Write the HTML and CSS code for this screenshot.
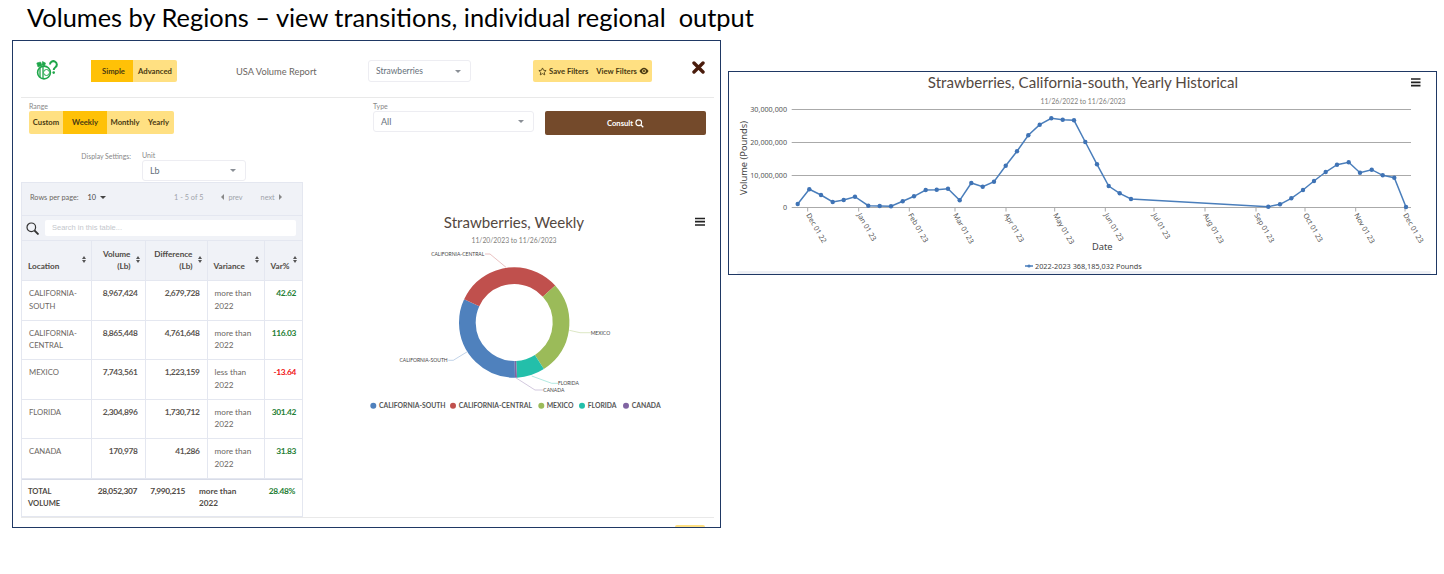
FILE: index.html
```html
<!DOCTYPE html>
<html>
<head>
    <meta charset="utf-8" />
    <title>Volumes by Regions</title>
    <link rel="stylesheet" href="styles.css">
</head>
<body>
    <h1 class="slide-title">Volumes by Regions – view transitions, individual regional &nbsp;output</h1>
    <div class="slide">

        <!-- report window -->
        <div class="window report">
            <div class="topbar">
                <svg class="logo" width="22" height="20" viewBox="0 0 22 20">
                    <g fill="none" stroke="#1fa64a">
                        <circle cx="8" cy="12.5" r="6.4" stroke-width="1.6"/>
                        <path d="M4 8v9M7 6.5v12" stroke-width="1.3"/>
                        <path d="M2 7 L0.8 3 L4.5 2 L6 5.5z" fill="#1fa64a" stroke-width=".6"/>
                        <path d="M6 5 L6.5 1.5 L9.5 3 L8.5 6z" fill="#1fa64a" stroke-width=".6"/>
                        <circle cx="10.5" cy="12.5" r="3" fill="#fff" stroke-width="1"/>
                    </g>
                    <path d="M14 4.5a3.4 3.4 0 1 1 5.4 2.8c-1.2.9-1.7 1.3-1.7 2.7" fill="none" stroke="#1fa64a" stroke-width="2"/>
                    <circle cx="17.7" cy="12.6" r="1.3" fill="#1fa64a"/>
                </svg>
                <div class="btn-group top-mode">
                    <span class="btn on simple">Simple</span>
                    <span class="btn advanced">Advanced</span>
                </div>
                <div class="report-name">USA Volume Report</div>
                <div class="select product"><span>Strawberries</span><i class="caret"></i></div>
                <div class="btn-group filters">
                    <svg width="9" height="9" viewBox="0 0 24 24"><path d="M12 2.5l2.9 6.2 6.8.8-5 4.7 1.3 6.8-6-3.4-6 3.4 1.3-6.8-5-4.7 6.8-.8z" fill="none" stroke="#4a3a12" stroke-width="2.2"/></svg>
                    <span>Save Filters</span>
                    <span class="view-filters">View Filters</span>
                    <svg width="10" height="8" viewBox="0 0 24 18"><path d="M1 9c3-5 7-8 11-8s8 3 11 8c-3 5-7 8-11 8S4 14 1 9z" fill="#4a3a12"/><circle cx="12" cy="9" r="4.5" fill="#ffe082"/><circle cx="12" cy="9" r="2.5" fill="#4a3a12"/></svg>
                </div>
                <svg class="close" width="13" height="13" viewBox="0 0 13 13"><path d="M2 2l9 9M11 2l-9 9" stroke="#4a1c0c" stroke-width="3.4" stroke-linecap="round"/></svg>
            </div>

            <div class="filter-row">
                <div class="range">
                    <label>Range</label>
                    <div class="btn-group">
                        <span class="btn custom">Custom</span>
                        <span class="btn on weekly">Weekly</span>
                        <span class="btn monthly">Monthly</span>
                        <span class="btn yearly">Yearly</span>
                    </div>
                </div>
                <div class="type">
                    <label>Type</label>
                    <div class="select type-select"><span>All</span><i class="caret"></i></div>
                </div>
                <div class="consult">Consult
                    <svg width="9" height="9" viewBox="0 0 12 12"><circle cx="5" cy="5" r="3.8" fill="none" stroke="#fff" stroke-width="1.5"/><path d="M8 8l3 3" stroke="#fff" stroke-width="1.7"/></svg>
                </div>
            </div>

            <div class="display-row">
                <div class="display-label">Display Settings:</div>
                <div class="unit">
                    <label>Unit</label>
                    <div class="select unit-select"><span>Lb</span><i class="caret"></i></div>
                </div>
            </div>

            <div class="content">
                <div class="data-table">
                    <div class="table-tools">
                        <span class="rows-label">Rows per page:</span>
                        <span class="rows-value">10</span><i class="caret dark"></i>
                        <span class="range-count">1 - 5 of 5</span>
                        <span class="pager prev"><i class="tri-l"></i>prev</span>
                        <span class="pager next">next<i class="tri-r"></i></span>
                    </div>
                    <div class="table-search">
                        <svg width="13" height="13" viewBox="0 0 13 13"><circle cx="5.3" cy="5.3" r="4.3" fill="none" stroke="#333" stroke-width="1.2"/><path d="M8.5 8.5l4 4" stroke="#333" stroke-width="1.8"/></svg>
                        <div class="search-box">Search in this table...</div>
                    </div>
                    <table>
                        <colgroup>
                            <col class="c1"><col class="c2"><col class="c3"><col class="c4"><col class="c5">
                        </colgroup>
                        <thead>
                            <tr>
                                <th class="left">Location<i class="sort"></i></th>
                                <th class="num">Volume<br>(Lb)<i class="sort"></i></th>
                                <th class="num">Difference<br>(Lb)<i class="sort"></i></th>
                                <th class="left">Variance<i class="sort"></i></th>
                                <th class="left">Var%<i class="sort"></i></th>
                            </tr>
                        </thead>
                        <tbody>
                            <tr>
                                <td>CALIFORNIA-<br>SOUTH</td><td class="val">8,967,424</td><td class="val">2,679,728</td>
                                <td>more than<br>2022</td><td class="pct up">42.62</td>
                            </tr>
                            <tr>
                                <td>CALIFORNIA-<br>CENTRAL</td><td class="val">8,865,448</td><td class="val">4,761,648</td>
                                <td>more than<br>2022</td><td class="pct up">116.03</td>
                            </tr>
                            <tr>
                                <td>MEXICO</td><td class="val">7,743,561</td><td class="val">1,223,159</td>
                                <td>less than<br>2022</td><td class="pct down">-13.64</td>
                            </tr>
                            <tr>
                                <td>FLORIDA</td><td class="val">2,304,896</td><td class="val">1,730,712</td>
                                <td>more than<br>2022</td><td class="pct up">301.42</td>
                            </tr>
                            <tr>
                                <td>CANADA</td><td class="val">170,978</td><td class="val">41,286</td>
                                <td>more than<br>2022</td><td class="pct up">31.83</td>
                            </tr>
                        </tbody>
                    </table>
                    <div class="table-total">
                        <span class="total-name">TOTAL<br>VOLUME</span>
                        <span class="r">28,052,307</span>
                        <span class="r">7,990,215</span>
                        <span class="var">more than<br>2022</span>
                        <span class="r up">28.48%</span>
                    </div>
                </div>

                <svg class="donut" width="411" height="215" viewBox="0 0 411 215">
                    <text class="chart-title" x="211" y="23" text-anchor="middle">Strawberries, Weekly</text>
                    <text class="chart-sub" x="211" y="38" text-anchor="middle">11/20/2023 to 11/26/2023</text>
                    <path d="M392 13.5h10M392 16.7h10M392 20h10" stroke="#222" stroke-width="1.7"/>

                    <g fill="none" stroke-width="16.7">
                        <circle cx="211.2" cy="117.5" r="46.85" pathLength="360" stroke="#4f81bd" stroke-dasharray="115.7 360" transform="rotate(89.2 211.2 117.5)"/>
                        <circle cx="211.2" cy="117.5" r="46.85" pathLength="360" stroke="#c0504d" stroke-dasharray="113.1 360" transform="rotate(204.9 211.2 117.5)"/>
                        <circle cx="211.2" cy="117.5" r="46.85" pathLength="360" stroke="#9bbb59" stroke-dasharray="99.5 360" transform="rotate(-42 211.2 117.5)"/>
                        <circle cx="211.2" cy="117.5" r="46.85" pathLength="360" stroke="#23bfaa" stroke-dasharray="29.6 360" transform="rotate(57.5 211.2 117.5)"/>
                        <circle cx="211.2" cy="117.5" r="46.85" pathLength="360" stroke="#8064a2" stroke-dasharray="2.1 360" transform="rotate(87.1 211.2 117.5)"/>
                    </g>

                    <g fill="none" stroke-width=".7">
                        <path d="M164.3 146.7L150.3 155.3H145.3" stroke="#a7c0de"/>
                        <path d="M182 49H187L203 62.3" stroke="#dfa7a6"/>
                        <path d="M266.3 125.3L277 127.7H287.7" stroke="#cddcac"/>
                        <path d="M228.7 171L248.7 178.3H255" stroke="#91dfd4"/>
                        <path d="M212.7 172.7L232 185H240.3" stroke="#bfb1d0"/>
                    </g>
                    <g class="pie-label">
                        <text x="144.7" y="157" text-anchor="end">CALIFORNIA-SOUTH</text>
                        <text x="181.3" y="51" text-anchor="end">CALIFORNIA-CENTRAL</text>
                        <text x="287.7" y="130">MEXICO</text>
                        <text x="255" y="180">FLORIDA</text>
                        <text x="240.3" y="187">CANADA</text>
                    </g>

                    <g class="pie-legend">
                        <circle cx="70.3" cy="200.7" r="3" fill="#4f81bd"/><text x="76" y="203">CALIFORNIA-SOUTH</text>
                        <circle cx="150" cy="200.7" r="3" fill="#c0504d"/><text x="155.7" y="203">CALIFORNIA-CENTRAL</text>
                        <circle cx="238.3" cy="200.7" r="3" fill="#9bbb59"/><text x="243.7" y="203">MEXICO</text>
                        <circle cx="279" cy="200.7" r="3" fill="#23bfaa"/><text x="284.7" y="203">FLORIDA</text>
                        <circle cx="323" cy="200.7" r="3" fill="#8064a2"/><text x="328.7" y="203">CANADA</text>
                    </g>
                </svg>
            </div>
            <div class="bottom-bar"><span class="stub"></span></div>
        </div>

        <!-- historical chart window -->
        <div class="window history">
            <svg width="707" height="202" viewBox="0 0 707 202">
                <text class="chart-title" x="354" y="16" text-anchor="middle">Strawberries, California-south, Yearly Historical</text>
                <text class="chart-sub" x="354" y="32" text-anchor="middle">11/26/2022 to 11/26/2023</text>
                <path d="M682 7h9.5M682 10.3h9.5M682 13.6h9.5" stroke="#222" stroke-width="1.7"/>

                <path class="grid" d="M62.7 37.5H682M62.7 70.5H682M62.7 103.5H682M62.7 135.5H682"/>
                <path class="grid" d="M78.7 135.5v4M129.7 135.5v4M180.3 135.5v4M226 135.5v4M277 135.5v4M325.7 135.5v4M376.3 135.5v4M425 135.5v4M476 135.5v4M527 135.5v4M576 135.5v4M626.7 135.5v4M676 135.5v4"/>

                <g class="axis-y" text-anchor="end">
                    <text x="58" y="40">30,000,000</text>
                    <text x="58" y="73">20,000,000</text>
                    <text x="58" y="106">10,000,000</text>
                    <text x="58" y="138">0</text>
                </g>
                <g class="axis-x">
                    <text transform="translate(77 143) rotate(60)">Dec 01 22</text>
                    <text transform="translate(128 143) rotate(60)">Jan 01 23</text>
                    <text transform="translate(179 143) rotate(60)">Feb 01 23</text>
                    <text transform="translate(224 143) rotate(60)">Mar 01 23</text>
                    <text transform="translate(275 143) rotate(60)">Apr 01 23</text>
                    <text transform="translate(324 143) rotate(60)">May 01 23</text>
                    <text transform="translate(375 143) rotate(60)">Jun 01 23</text>
                    <text transform="translate(423 143) rotate(60)">Jul 01 23</text>
                    <text transform="translate(474 143) rotate(60)">Aug 01 23</text>
                    <text transform="translate(525 143) rotate(60)">Sep 01 23</text>
                    <text transform="translate(574 143) rotate(60)">Oct 01 23</text>
                    <text transform="translate(625 143) rotate(60)">Nov 01 23</text>
                    <text transform="translate(674 143) rotate(60)">Dec 01 23</text>
                </g>
                <text class="axis-title" transform="translate(18 86) rotate(-90)" text-anchor="middle">Volume (Pounds)</text>
                <text class="axis-title" x="363" y="178">Date</text>

                <polyline class="series" points="68.7,132 80.3,117.3 92,123 103.7,130 114.7,128 126,124.7 139.3,133.7 150.7,134 162,134.3 173.7,129.3 185,124.3 196.7,118 207.7,117.7 219,116.7 230.7,128.3 242.3,111 253.7,114.7 265,109.7 276.7,93.7 288,79.3 299.3,63.3 310.7,52.7 322.3,46.3 333.7,47.7 345,48.3 356.3,70 368,92.3 379.7,114 390.7,121.3 402,127 539.3,134.7 551,132.3 562.3,126.3 574,118 585,109 596.7,100 608,92.7 619.7,90.3 631,100.7 642.7,97.7 653.7,103.3 665.3,105.7 677,135"/>
                <g class="dots">
                    <circle cx="68.7" cy="132" r="2.2"/><circle cx="80.3" cy="117.3" r="2.2"/><circle cx="92" cy="123" r="2.2"/><circle cx="103.7" cy="130" r="2.2"/><circle cx="114.7" cy="128" r="2.2"/><circle cx="126" cy="124.7" r="2.2"/><circle cx="139.3" cy="133.7" r="2.2"/><circle cx="150.7" cy="134" r="2.2"/><circle cx="162" cy="134.3" r="2.2"/><circle cx="173.7" cy="129.3" r="2.2"/><circle cx="185" cy="124.3" r="2.2"/><circle cx="196.7" cy="118" r="2.2"/><circle cx="207.7" cy="117.7" r="2.2"/><circle cx="219" cy="116.7" r="2.2"/><circle cx="230.7" cy="128.3" r="2.2"/><circle cx="242.3" cy="111" r="2.2"/><circle cx="253.7" cy="114.7" r="2.2"/><circle cx="265" cy="109.7" r="2.2"/><circle cx="276.7" cy="93.7" r="2.2"/><circle cx="288" cy="79.3" r="2.2"/><circle cx="299.3" cy="63.3" r="2.2"/><circle cx="310.7" cy="52.7" r="2.2"/><circle cx="322.3" cy="46.3" r="2.2"/><circle cx="333.7" cy="47.7" r="2.2"/><circle cx="345" cy="48.3" r="2.2"/><circle cx="356.3" cy="70" r="2.2"/><circle cx="368" cy="92.3" r="2.2"/><circle cx="379.7" cy="114" r="2.2"/><circle cx="390.7" cy="121.3" r="2.2"/><circle cx="402" cy="127" r="2.2"/><circle cx="539.3" cy="134.7" r="2.2"/><circle cx="551" cy="132.3" r="2.2"/><circle cx="562.3" cy="126.3" r="2.2"/><circle cx="574" cy="118" r="2.2"/><circle cx="585" cy="109" r="2.2"/><circle cx="596.7" cy="100" r="2.2"/><circle cx="608" cy="92.7" r="2.2"/><circle cx="619.7" cy="90.3" r="2.2"/><circle cx="631" cy="100.7" r="2.2"/><circle cx="642.7" cy="97.7" r="2.2"/><circle cx="653.7" cy="103.3" r="2.2"/><circle cx="665.3" cy="105.7" r="2.2"/><circle cx="677" cy="135" r="2.2"/>
                </g>

                <path class="series" d="M296 194h8"/>
                <circle cx="300" cy="194" r="1.6" fill="#4a7ebb"/>
                <text class="history-legend" x="306" y="197">2022-2023 368,185,032 Pounds</text>
                <rect x="8" y="199" width="694" height="3" rx="1.5" fill="#eef0f5"/>
            </svg>
        </div>
    </div>
</body>
</html>
```

FILE: styles.css
```css
*{
    box-sizing:border-box;
}
body{
    margin:0;
    background:#fff;
    font-family:"Lato","Noto Sans",sans-serif;
    color:#6b6662;
}
.slide-title{
    margin:0 0 0 27px;
    height:40px;
    font-size:25.4px;
    font-weight:400;
    line-height:35px;
    color:#000;
}
.slide{
    display:flex;
    align-items:flex-start;
    gap:7px;
    padding-left:12px;
}
.window{
    background:#fff;
    border:1px solid #1f3864;
    overflow:hidden;
}
.report{
    width:709px;
    height:488px;
    flex:none;
}
.history{
    width:709px;
    height:204px;
    margin-top:31px;
    flex:none;
}
.history svg,.donut{
    display:block;
}

/* top bar */
.topbar{
    display:flex;
    align-items:center;
    height:57px;
    margin:0 6px 0 8px;
    padding-top:4px;
    border-bottom:1px solid #e9e9e9;
}
.logo{
    margin-left:15px;
    margin-top:-2px;
    flex:none;
}
.btn-group{
    display:flex;
    height:22px;
    background:#ffe082;
    border-radius:2px;
    color:#4a3a12;
    font-size:7.7px;
    font-weight:700;
    line-height:22px;
    flex:none;
    white-space:nowrap;
}
.btn{
    display:block;
    text-align:center;
}
.btn.on{
    background:#ffc107;
}
.top-mode{
    margin-left:33px;
    width:86px;
}
.simple{width:42px;padding-left:3px;}
.advanced{width:44px;}
.report-name{
    margin-left:59px;
    width:132px;
    font-size:9.3px;
    flex:none;
}
.select{
    display:flex;
    align-items:center;
    justify-content:space-between;
    height:22px;
    padding:0 9px 0 7px;
    background:#fff;
    border:1px solid #ededf2;
    border-radius:3px;
    color:#66707a;
    font-size:8.5px;
}
.caret{
    display:inline-block;
    width:0;
    height:0;
    border-left:3px solid transparent;
    border-right:3px solid transparent;
    border-top:3px solid #8a8f96;
}
.caret.dark{
    border-top-color:#444;
    margin-left:4px;
}
.product{
    width:103px;
    flex:none;
}
.filters{
    margin-left:62px;
    width:119px;
    align-items:center;
    padding-left:5px;
    gap:2px;
}
.view-filters{
    margin-left:6px;
}
.close{
    margin-left:40px;
    margin-top:-7px;
    flex:none;
}

/* filters */
label{
    display:block;
    font-size:7px;
    line-height:10px;
    color:#888;
}
.filter-row{
    display:flex;
    height:37px;
    padding:3px 0 0 16px;
}
.range{
    width:344px;
    flex:none;
}
.range .btn-group{
    width:145px;
    height:23px;
    margin-top:0;
    line-height:23px;
}
.custom{width:34px;}
.weekly{width:44px;}
.monthly{width:36px;}
.yearly{width:31px;}
.type{
    width:172px;
    flex:none;
}
.type-select{
    width:161px;
    height:21px;
    font-size:9px;
}
.consult{
    display:flex;
    align-items:center;
    justify-content:center;
    gap:2px;
    width:161px;
    height:24px;
    margin-top:10px;
    background:#744a2b;
    border-radius:2px;
    color:#fff;
    font-size:7.7px;
    font-weight:700;
}
.display-row{
    display:flex;
    height:47px;
    padding-top:15px;
}
.display-label{
    width:118px;
    padding-top:1px;
    font-size:6.9px;
    line-height:10px;
    text-align:right;
    color:#888;
    flex:none;
}
.unit{
    margin-left:11px;
}
.unit-select{
    width:104px;
    height:21px;
    font-size:9px;
}

/* table */
.content{
    display:flex;
    align-items:flex-start;
    height:336px;
    margin:0 6px 0 8px;
    border-bottom:1px solid #e9e9e9;
}
.data-table{
    width:282px;
    height:335px;
    border:1px solid #e4e7f0;
    flex:none;
    font-size:8.2px;
}
.table-tools{
    display:flex;
    align-items:center;
    height:33px;
    padding:0 0 4px 8px;
    background:#f0f2f7;
    border-bottom:1px solid #e4e7f0;
    font-size:7.3px;
}
.rows-value{
    margin-left:9px;
    color:#444;
}
.range-count{
    margin-left:68px;
    color:#a0a4ab;
}
.pager{
    color:#a0a4ab;
    display:inline-flex;
    align-items:center;
    gap:4px;
}
.prev{margin-left:18px;}
.next{margin-left:18px;}
.tri-l,.tri-r{
    width:0;
    height:0;
    border-top:3px solid transparent;
    border-bottom:3px solid transparent;
}
.tri-l{border-right:3px solid #888;}
.tri-r{border-left:3px solid #888;}
.table-search{
    display:flex;
    align-items:center;
    gap:6px;
    height:24px;
    padding-left:4px;
    background:#f0f2f7;
}
.search-box{
    width:251px;
    height:16px;
    padding-left:7px;
    background:#fff;
    border-radius:2px;
    color:#c5c8cd;
    font-family:"Liberation Sans",sans-serif;
    font-size:7.5px;
    line-height:16px;
}
table{
    width:280px;
    border-collapse:collapse;
    table-layout:fixed;
}
.c1{width:69px;}
.c2{width:54px;}
.c3{width:62px;}
.c4{width:57px;}
.c5{width:38px;}
th{
    position:relative;
    height:40px;
    padding:0 14px 7px 6px;
    background:#f0f2f7;
    border:1px solid #e4e7f0;
    color:#4f4a45;
    font-size:8.2px;
    font-weight:700;
    line-height:12.7px;
    vertical-align:bottom;
}
th:first-child,td:first-child{border-left:0;}
th:last-child,td:last-child{border-right:0;}
th.left{text-align:left;}
th.num{text-align:right;}
th:last-child{padding-left:6px;padding-right:0;}
.sort{
    position:absolute;
    right:4px;
    top:15px;
    width:5px;
    height:7px;
}
.sort::before,.sort::after{
    content:"";
    position:absolute;
    left:0;
    border-left:2.5px solid transparent;
    border-right:2.5px solid transparent;
}
.sort::before{
    top:0;
    border-bottom:3px solid #555;
}
.sort::after{
    bottom:0;
    border-top:3px solid #555;
}
td{
    height:39.5px;
    padding:6px 7px 0;
    border:1px solid #e4e7f0;
    line-height:12.7px;
    vertical-align:top;
    color:#6b6662;
}
td:first-child{
    font-size:7.7px;
}
td.val,td.pct{
    text-align:right;
    font-weight:700;
    font-size:8.4px;
    letter-spacing:-.35px;
    color:#5a5550;
}
td.pct{
    padding-right:6px;
}
td.up,.table-total .up{color:#1e7e34;}
td.down{color:#f01414;}
.table-total{
    display:grid;
    grid-template-columns:62px 47px 48px 72px 38px;
    height:40px;
    padding:5px 7px 0 6px;
    border-top:1px solid #d8dce8;
    color:#4f4a45;
    font-weight:700;
    line-height:12.7px;
}
.table-total .r{
    text-align:right;
    font-size:8.4px;
    letter-spacing:-.35px;
}
.total-name{font-size:7.6px;}
.table-total .var{padding-left:14px;}
.bottom-bar{
    display:flex;
    justify-content:flex-end;
    padding:7px 15px 0 0;
}
.stub{
    width:30px;
    height:6px;
    background:#ffe082;
    border-radius:2px;
}

/* charts */
.donut{
    margin-top:23px;
    flex:none;
}
.chart-title{
    font-size:15.1px;
    fill:#54483f;
}
.chart-sub{
    font-size:6.8px;
    fill:#80807c;
}
.pie-label text{
    font-size:5px;
    fill:#444;
}
.pie-legend text{
    font-size:6.8px;
    fill:#555;
    font-weight:700;
}
.grid{
    fill:none;
    stroke:#aaa;
    stroke-width:1;
}
.axis-y text,.axis-x text{
    font-family:"Noto Sans",sans-serif;
    font-size:7.2px;
    fill:#555;
}
.axis-title{
    font-family:"Noto Sans",sans-serif;
    font-size:9.3px;
    fill:#444;
}
.series{
    fill:none;
    stroke:#4a7ebb;
    stroke-width:1.5;
}
.dots circle{
    fill:#3f73b5;
}
.history-legend{
    font-family:"Noto Sans",sans-serif;
    font-size:7.3px;
    fill:#444;
}
```
